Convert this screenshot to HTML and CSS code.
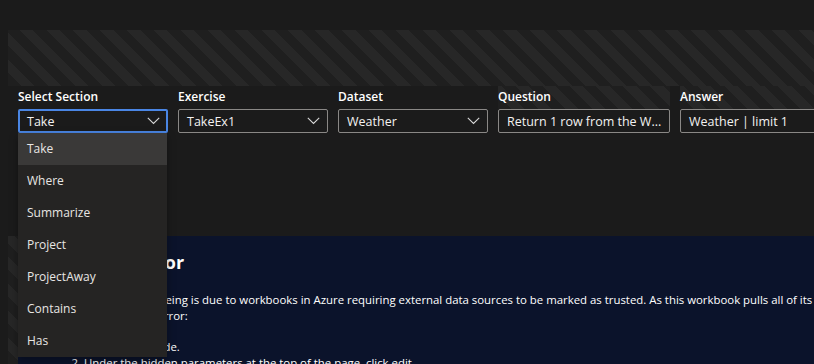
FILE: index.html
```html
<!DOCTYPE html>
<html lang="en">
<head>
<meta charset="utf-8">
<title>Workbook</title>
<link rel="stylesheet" href="styles.css">
</head>
<body>
<div class="page">
  <div class="topbar"></div>
  <div class="band hatch"></div>
  <div class="params">
    <div class="param w150">
      <div class="label">Select Section</div>
      <div class="box focused"><span class="val">Take</span><svg class="chev" width="13" height="8" viewBox="0 0 13 8"><path d="M0.8 0.8 L6.5 6.5 L12.2 0.8" fill="none" stroke="#d6d6d6" stroke-width="1.1"/></svg></div>
    </div>
    <div class="param w150">
      <div class="label">Exercise</div>
      <div class="box"><span class="val">TakeEx1</span><svg class="chev" width="13" height="8" viewBox="0 0 13 8"><path d="M0.8 0.8 L6.5 6.5 L12.2 0.8" fill="none" stroke="#d6d6d6" stroke-width="1.1"/></svg></div>
    </div>
    <div class="param w150">
      <div class="label">Dataset</div>
      <div class="box"><span class="val">Weather</span><svg class="chev" width="13" height="8" viewBox="0 0 13 8"><path d="M0.8 0.8 L6.5 6.5 L12.2 0.8" fill="none" stroke="#d6d6d6" stroke-width="1.1"/></svg></div>
    </div>
    <div class="param w172">
      <div class="label hatch">Question</div>
      <div class="box"><span class="val">Return 1 row from the W...</span></div>
    </div>
    <div class="param w200">
      <div class="label hatch">Answer</div>
      <div class="box"><span class="val">Weather | limit 1</span></div>
    </div>
  </div>
  <div class="spacer"></div>
  <div class="lower">
    <div class="strip hatch"></div>
    <div class="panel">
      <h2 class="heading">Workbook Error</h2>
      <p class="para">The error you are seeing is due to workbooks in Azure requiring external data sources to be marked as trusted. As this workbook pulls all of its data from GitHub,<br>these steps fix the error:</p>
      <ol class="steps">
        <li>Enable edit mode.</li>
        <li>Under the hidden parameters at the top of the page, click edit.</li>
      </ol>
    </div>
  </div>
  <ul class="menu">
    <li class="item active">Take</li>
    <li class="item">Where</li>
    <li class="item">Summarize</li>
    <li class="item">Project</li>
    <li class="item">ProjectAway</li>
    <li class="item">Contains</li>
    <li class="item">Has</li>
  </ul>
</div>
</body>
</html>
```
FILE: styles.css
```css
html, body {
  margin: 0;
  padding: 0;
  background: #1b1b1b;
  overflow: hidden;
}
.page {
  position: relative;
  width: 814px;
  height: 364px;
  overflow: hidden;
  font-family: "Open Sans", "Noto Sans", sans-serif;
  color: #f3f2f1;
}
.hatch {
  background: repeating-linear-gradient(45deg, #1f1f1f 0 9.5px, #272727 9.5px 19px);
}
.topbar {
  height: 30px;
}
.band {
  height: 56px;
  margin-left: 8px;
}
.params {
  display: flex;
  gap: 10px;
  padding-left: 18px;
}
.param {
  flex: none;
  display: flex;
  flex-direction: column;
}
.w150 { width: 150px; }
.w172 { width: 172px; }
.w200 { width: 200px; }
.label {
  height: 23px;
  box-sizing: border-box;
  padding-top: 3px;
  line-height: 16px;
  font-size: 12px;
  font-weight: 600;
  color: #ffffff;
  white-space: nowrap;
}
.box {
  height: 24px;
  box-sizing: border-box;
  border: 1px solid #8a8886;
  border-radius: 2px;
  display: flex;
  align-items: center;
  justify-content: space-between;
  padding: 0 7px 0 8px;
  font-size: 12.5px;
  color: #f3f2f1;
  white-space: nowrap;
  overflow: hidden;
}
.box.focused {
  border: 2px solid #4a86e4;
  padding: 0 6px 0 7px;
}
.chev {
  flex: none;
}
.spacer {
  height: 103px;
}
.lower {
  display: flex;
  margin-left: 8px;
  height: 128px;
}
.strip {
  width: 10px;
  flex: none;
}
.panel {
  flex: none;
  width: 1100px;
  background: #0b132b;
  box-sizing: border-box;
  padding: 14px 0 0 40px;
  color: #ffffff;
  white-space: nowrap;
}
.heading {
  margin: 0 0 18px -17px;
  font-size: 18px;
  line-height: 24px;
  font-weight: 700;
}
.para {
  margin: 0 0 15px 0;
  font-size: 11.4px;
  line-height: 16px;
}
.steps {
  margin: 0;
  padding-left: 26px;
  font-size: 11.4px;
  line-height: 16px;
}
.menu {
  position: absolute;
  left: 18px;
  top: 133px;
  width: 149px;
  margin: 0;
  padding: 0;
  list-style: none;
  background: #252423;
  box-shadow: 0 3px 8px rgba(0, 0, 0, 0.35);
}
.item {
  height: 32px;
  line-height: 32px;
  padding-left: 9px;
  font-size: 12px;
  color: #e8e6e4;
}
.item.active {
  background: #3a3938;
}
```
